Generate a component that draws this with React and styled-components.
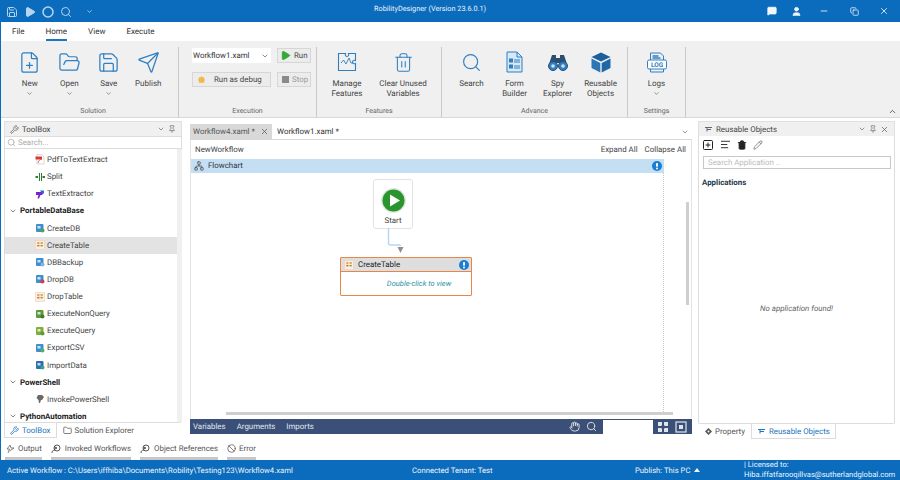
import React from "react";
import styled, { createGlobalStyle } from "styled-components";
import {
  FilePlus, FolderOpen, Save, Send, Trash2, Search, Play, ChevronDown, ChevronUp, Pin, X,
  Circle, Minus, MessageSquare, User, Copy, Pencil, Hand, Network, SquarePlus, AlignLeft, Folder, Ban, Wrench,
} from "lucide-react";

const GlobalStyle = createGlobalStyle`
  html, body { margin: 0; padding: 0; background: #fff; }
  body {
    font-family: Roboto, "Noto Sans", sans-serif;
    font-size: 7.9px;
    color: #333;
    text-rendering: geometricPrecision;
  }
  * { box-sizing: border-box; }
`;

const Window = styled.div`
  width: 900px;
  height: 480px;
  display: flex;
  flex-direction: column;
  overflow: hidden;
  border-left: 1px solid #0b6cbd;
`;

const TitleBar = styled.div`
  height: 22px;
  flex: none;
  background: #0b6cbd;
  display: flex;
  align-items: center;
  color: #eaf3fb;
  padding-left: 5px;
`;

const QuickTools = styled.div`
  display: flex;
  align-items: center;
  gap: 6px;
  width: 368px;
  padding-top: 1px;
  svg { color: #b9d5ee; }
`;

const Title = styled.div`
  flex: 1;
  font-size: 7.3px;
  margin-top: -5px;
`;

const WindowTools = styled.div`
  display: grid;
  grid-template-columns: 26px 23px 32px 29px 29px;
  justify-items: center;
  align-items: center;
  padding-right: 2px;
  svg { color: #f2f7fb; }
`;

const MenuBar = styled.div`
  height: 19px;
  flex: none;
  background: #fff;
  display: flex;
  gap: 21px;
  padding-left: 11px;
  align-items: center;
`;

const MenuItem = styled.div`
  height: 19px;
  line-height: 20px;
  font-size: 8px;
  color: #333;
  border-bottom: ${(p) => (p.$active ? "2px solid #1a75c0" : "2px solid transparent")};
`;

const Ribbon = styled.div`
  height: 77px;
  flex: none;
  background: #f0f0f0;
  border-bottom: 1px solid #d8d8d8;
  display: flex;
  padding-left: 7px;
  padding-top: 6px;
  position: relative;
`;

const Group = styled.div`
  width: ${(p) => p.$w}px;
  height: 70px;
  flex: none;
  border-right: 1px solid #c9c9c9;
  display: flex;
  flex-direction: column;
  padding-left: ${(p) => p.$pad || 0}px;
`;

const GroupBody = styled.div`
  flex: 1;
  display: flex;
  align-items: flex-start;
`;

const GroupLabel = styled.div`
  height: 12px;
  line-height: 12px;
  font-size: 7px;
  text-align: center;
  color: #666;
  margin-left: ${(p) => (p.$pad ? -p.$pad : 0)}px;
`;

const BigButton = styled.div`
  width: ${(p) => p.$w}px;
  height: 52px;
  display: flex;
  flex-direction: column;
  align-items: center;
  padding-top: 3px;
  color: #2f7fc1;
`;

const BigIcon = styled.div`
  height: 24px;
  display: flex;
  align-items: center;
`;

const BigLabel = styled.div`
  margin-top: 5px;
  font-size: 8px;
  line-height: 9.5px;
  color: #444;
  text-align: center;
  white-space: pre-line;
`;

const ExecGrid = styled.div`
  display: grid;
  grid-template-columns: 79px 34px;
  column-gap: 6px;
  row-gap: 9px;
  padding: 1px 0 0 13px;
`;

const Combo = styled.div`
  height: 15px;
  background: #fff;
  display: flex;
  align-items: center;
  justify-content: space-between;
  padding: 0 2px 0 1px;
  font-size: 7.9px;
  color: #333;
  svg { color: #555; }
`;

const ExecButton = styled.div`
  height: 15px;
  border: 1px solid #d6d6d6;
  background: #ececec;
  display: flex;
  align-items: center;
  gap: ${(p) => p.$gap || 3}px;
  padding-left: ${(p) => p.$pad || 3}px;
  font-size: 7.9px;
  color: ${(p) => (p.$muted ? "#999" : "#444")};
`;

const Collapse = styled.div`
  position: absolute;
  right: 3px;
  bottom: 1px;
  color: #333;
  display: flex;
`;

const Main = styled.div`
  flex: 1;
  min-height: 0;
  display: flex;
  background: #fff;
`;

const LeftColumn = styled.div`
  width: 178px;
  flex: none;
  margin-left: 3px;
  display: flex;
  flex-direction: column;
  padding-top: 3px;
`;

const PanelHeader = styled.div`
  height: 15px;
  flex: none;
  display: flex;
  align-items: center;
  gap: 3px;
  padding: 0 5px;
  background: #f0f0f0;
  border: 1px solid #e0e0e0;
  border-bottom: 0;
  font-size: 7.9px;
  color: #444;
  svg { color: #666; flex: none; }
`;

const HeaderDots = styled.div`
  flex: 1;
  height: 4px;
  margin: 0 3px;
  background-image: radial-gradient(#c4c4c4 0.6px, transparent 0.7px);
  background-size: 2px 2px;
`;

const SearchBox = styled.div`
  height: 13px;
  flex: none;
  background: #fff;
  border: 1px solid #dcdcdc;
  display: flex;
  align-items: center;
  gap: 2px;
  padding-left: 2px;
  font-size: 7.9px;
  color: #aaa;
  svg { color: #aaa; }
`;

const ToolList = styled.div`
  height: 274px;
  flex: none;
  position: relative;
  overflow: hidden;
  padding-top: 2px;
  border: 1px solid #dcdcdc;
  border-top: 0;
  border-right: 5px solid #f0f0f0;
`;

const ListThumb = styled.div`
  position: absolute;
  right: -5px;
  top: 212px;
  width: 4px;
  height: 14px;
  background: #c8c8c8;
`;

const TreeRow = styled.div`
  height: 17.13px;
  display: flex;
  align-items: center;
  gap: ${(p) => (p.$head ? 3 : 2)}px;
  padding-left: ${(p) => (p.$head ? 4 : 30)}px;
  font-size: 7.9px;
  font-weight: ${(p) => (p.$head ? 700 : 400)};
  color: ${(p) => (p.$head ? "#222" : "#444")};
  background: ${(p) => (p.$selected ? "#e3e3e3" : "transparent")};
  svg { flex: none; }
`;

const PanelTabs = styled.div`
  height: 15px;
  flex: none;
  display: flex;
  align-items: center;
  margin-left: ${(p) => p.$left || 0}px;
`;

const PanelTab = styled.div`
  height: 15px;
  display: flex;
  align-items: center;
  gap: 3px;
  padding: 0 5px;
  font-size: 7.9px;
  color: ${(p) => (p.$active ? "#1a75c0" : "#555")};
  background: #fff;
  border: ${(p) => (p.$active ? "1px solid #dcdcdc" : "1px solid transparent")};
  border-top: 0;
`;

const BottomTabs = styled.div`
  height: 20px;
  margin-top: 2px;
  display: flex;
  gap: 9px;
  padding-left: 1px;
  width: 300px;
`;

const BottomTab = styled.div`
  height: 20px;
  display: flex;
  align-items: center;
  gap: 3px;
  font-size: 7.9px;
  color: #555;
  white-space: nowrap;
  border-bottom: 3px solid #c6c6c6;
`;

const Center = styled.div`
  width: 502px;
  flex: none;
  margin-left: 8px;
  padding-top: 6px;
  display: flex;
  flex-direction: column;
`;

const DocTabs = styled.div`
  height: 16px;
  flex: none;
  display: flex;
  align-items: center;
  border-bottom: 1px solid #d8d8d8;
  padding-right: 3px;
`;

const DocTab = styled.div`
  height: 15px;
  display: flex;
  align-items: center;
  justify-content: space-between;
  width: ${(p) => (p.$active ? "82px" : "auto")};
  padding: 0 3px;
  margin-right: 2px;
  font-size: 7.9px;
  color: ${(p) => (p.$active ? "#555" : "#333")};
  background: ${(p) => (p.$active ? "#d9d9d9" : "#fff")};
`;

const Breadcrumb = styled.div`
  height: 19px;
  flex: none;
  display: flex;
  align-items: center;
  justify-content: space-between;
  padding: 0 5px 0 4px;
  font-size: 7.9px;
  color: #444;
  border-left: 1px solid #e4e4e4;
  border-right: 1px solid #e4e4e4;
`;

const CrumbLinks = styled.div`
  display: flex;
  gap: 7px;
`;

const Canvas = styled.div`
  height: 259px;
  flex: none;
  position: relative;
  border: 1px solid #e4e4e4;
  border-top: 0;
  border-bottom: 0;
  overflow: hidden;
`;

const FlowHeader = styled.div`
  width: 473px;
  height: 14px;
  background: #c4dff3;
  display: flex;
  align-items: center;
  justify-content: space-between;
  padding: 0 2px 1px 3px;
  font-size: 7.9px;
  color: #333;
`;

const FlowTitle = styled.div`
  display: flex;
  align-items: center;
  gap: 4px;
`;

const FlowBorder = styled.div`
  position: absolute;
  left: 472px;
  top: 14px;
  bottom: 4px;
  border-right: 1px dotted #c8c8c8;
`;

const ScrollV = styled.div`
  position: absolute;
  right: 2px;
  top: 43px;
  width: 3px;
  height: 103px;
  background: #cfcfcf;
`;

const ScrollH = styled.div`
  position: absolute;
  left: 35px;
  bottom: 3px;
  width: 447px;
  height: 3px;
  background: #cfcfcf;
`;

const StartNode = styled.div`
  position: absolute;
  left: 182px;
  top: 20px;
  width: 40px;
  height: 50px;
  background: #fff;
  border: 1px solid #e2e2e2;
  border-radius: 3px;
  display: flex;
  flex-direction: column;
  align-items: center;
  padding-top: 8px;
  gap: 3px;
  font-size: 7.9px;
  color: #444;
`;

const Connector = styled.svg`
  position: absolute;
  left: 196px;
  top: 69px;
`;

const ActivityNode = styled.div`
  position: absolute;
  left: 149px;
  top: 98px;
  width: 132px;
  height: 39px;
  background: #fff;
  border: 1px solid #e8864a;
  border-radius: 1px;
`;

const ActivityHead = styled.div`
  height: 14px;
  background: #dedede;
  border-bottom: 1px solid #e8864a;
  display: flex;
  align-items: center;
  justify-content: space-between;
  padding: 0 2px 0 3px;
  font-size: 7.9px;
  color: #222;
`;

const ActivityTitle = styled.div`
  display: flex;
  align-items: center;
  gap: 4px;
`;

const ActivityHint = styled.div`
  height: 23px;
  display: flex;
  align-items: center;
  justify-content: center;
  padding-left: 26px;
  font-size: 7.5px;
  font-style: italic;
  color: #2b93a8;
`;

const DesignerBar = styled.div`
  height: 15px;
  flex: none;
  margin-top: 1px;
  background: #3b5078;
  display: flex;
  align-items: center;
  padding-left: 3px;
  gap: 11px;
  font-size: 7.9px;
  color: #e2e7ef;
`;

const ZoomTools = styled.div`
  margin-left: auto;
  display: flex;
  align-items: center;
  gap: 6px;
  padding-right: 5px;
  svg { color: #e6e6e6; flex: none; }
`;

const ZoomCombo = styled.div`
  width: 50px;
  height: 14px;
  background: #fff;
  margin-right: -2px;
`;

const RightColumn = styled.div`
  width: 197px;
  flex: none;
  margin-left: 6px;
  padding-top: 3px;
  display: flex;
  flex-direction: column;
`;

const ReusablePanel = styled.div`
  height: 288px;
  flex: none;
  border: 1px solid #dcdcdc;
  border-top: 0;
  border-radius: 0 0 2px 2px;
  display: flex;
  flex-direction: column;
  position: relative;
`;

const IconRow = styled.div`
  height: 17px;
  display: flex;
  align-items: center;
  gap: 6px;
  padding-left: 3px;
  color: #222;
`;

const AppSearch = styled.div`
  height: 13px;
  margin: 3px 3px 0 4px;
  border: 1px solid #c8c8c8;
  padding-left: 4px;
  line-height: 11px;
  font-size: 7.9px;
  color: #bbb;
`;

const SectionTitle = styled.div`
  margin: 9px 0 0 3px;
  font-size: 7.9px;
  font-weight: 700;
  color: #26384d;
`;

const EmptyNote = styled.div`
  position: absolute;
  left: 0;
  right: 0;
  top: 168px;
  text-align: center;
  font-size: 7.9px;
  font-style: italic;
  color: #666;
`;

const StatusBar = styled.div`
  height: 20px;
  flex: none;
  background: #0b6cbd;
  color: #eef5fb;
  font-size: 7.7px;
  display: flex;
  align-items: center;
  padding-left: 6px;
`;

const StatusPath = styled.div`
  width: 405px;
  flex: none;
  white-space: nowrap;
`;

const StatusTenant = styled.div`
  width: 223px;
  flex: none;
`;

const StatusPublish = styled.div`
  width: 109px;
  flex: none;
  display: flex;
  align-items: center;
  gap: 4px;
`;

const StatusTriangle = styled.span`
  width: 0;
  height: 0;
  border-left: 3px solid transparent;
  border-right: 3px solid transparent;
  border-bottom: 4px solid #eef5fb;
`;

const License = styled.div`
  white-space: nowrap;
  line-height: 10px;
  font-size: 7.6px;
`;

const FileIcon = ({ color, accent }) => (
  <svg width="10" height="10" viewBox="0 0 10 10">
    <rect x="1" y="1" width="7.5" height="8" rx="1" fill={color} />
    <rect x="2.5" y="3" width="3" height="2.5" fill="#fff" opacity="0.75" />
    <circle cx="7.5" cy="7.5" r="2" fill={accent || color} />
  </svg>
);

const TextExtractorIcon = () => (
  <svg width="10" height="10" viewBox="0 0 10 10">
    <path d="M1 3h8L7 6H5.5L4 9.5H2.5L3.5 6H1z" fill="#7a1fd1" />
    <path d="M5 1.5h4v3H7z" fill="#1f6fe0" />
  </svg>
);

const SplitIcon = () => (
  <svg width="10" height="10" viewBox="0 0 10 10">
    <rect x="4" y="1" width="1" height="8" fill="#2e7d32" />
    <rect x="6" y="1" width="1" height="8" fill="#2e7d32" />
    <rect x="0.5" y="4" width="2.5" height="2" fill="#2e7d32" />
    <rect x="7.5" y="4" width="2.5" height="2" fill="#2e7d32" />
  </svg>
);

const PdfIcon = () => (
  <svg width="10" height="11" viewBox="0 0 10 11">
    <path d="M2 .5h4.5L9 3v7H2z" fill="#fff" stroke="#c9c9c9" strokeWidth=".7" />
    <rect x=".5" y="2.5" width="6.5" height="3" fill="#d93a32" />
    <path d="M3 9c1-3 2-4 4-4" stroke="#d93a32" strokeWidth=".7" fill="none" />
  </svg>
);

const TableIcon = ({ size = 10 }) => (
  <svg width={size} height={size} viewBox="0 0 9 9">
    <rect x=".5" y=".5" width="8" height="8" fill="#fbeee2" stroke="#efd3bb" strokeWidth=".6" />
    <rect x="2" y="2" width="2" height="1.4" fill="#e2902f" />
    <rect x="5" y="2" width="2" height="1.4" fill="#e2902f" />
    <rect x="2" y="4.4" width="2" height="1.4" fill="#d9673f" />
    <rect x="5" y="4.4" width="2" height="1.4" fill="#6bae4a" />
  </svg>
);

const ShellIcon = () => (
  <svg width="10" height="10" viewBox="0 0 10 10">
    <path d="M3 1h4l2 2-2 3H6L5 9H4L3.5 6 1.5 4z" fill="#6a6a6a" />
  </svg>
);

const PropertyIcon = () => (
  <svg width="7" height="7" viewBox="0 0 7 7">
    <path d="M3.5 0 7 3.5 3.5 7 0 3.5z" fill="#555" />
    <circle cx="3.5" cy="3.5" r="1" fill="#fff" />
  </svg>
);

const LinkIcon = () => (
  <svg width="9" height="7" viewBox="0 0 9 7" fill="none" stroke="currentColor" strokeWidth="1">
    <path d="M1 1.5h7M3 1.5v4M3 3.5h4" />
  </svg>
);

const InvokeIcon = () => (
  <svg width="11" height="10" viewBox="0 0 11 10" fill="none" stroke="#555" strokeWidth="1">
    <circle cx="6" cy="4" r="3" />
    <path d="M1 9c0-2 1-3 3-3M4 3l2 1-2 1z" />
  </svg>
);

const OutputIcon = () => (
  <svg width="10" height="10" viewBox="0 0 10 10" fill="none" stroke="#666" strokeWidth=".8">
    <path d="M5 1 2 5h2.5L3 9M5 1l1 3h3L4.5 7" />
  </svg>
);

const InfoBadge = () => (
  <svg width="10" height="10" viewBox="0 0 10 10">
    <circle cx="5" cy="5" r="5" fill="#1a7fd4" />
    <rect x="4" y="2" width="2" height="3.8" rx=".8" fill="#fff" />
    <circle cx="5" cy="7.5" r="1" fill="#fff" />
  </svg>
);

const PuzzleIcon = () => (
  <svg width="20" height="20" viewBox="0 0 20 20" fill="none" stroke="#2f7fc1" strokeWidth="1.1">
    <path d="M1.5 1.5h7c-1 2 1 3 1.5 3s2.5-1 1.5-3h7v7c-2-1-3 1-3 1.5s1 2.5 3 1.5v7h-17z" />
    <path d="M4 11l2.5-3 2.5 4 3-6 2 5h2" strokeWidth=".9" />
  </svg>
);

const FormIcon = () => (
  <svg width="17" height="22" viewBox="0 0 17 22" fill="none" stroke="#2f7fc1" strokeWidth="1">
    <path d="M1 1h10l5 5v15H1z" fill="#d8e8f5" />
    <path d="M11 1v5h5" />
    <rect x="3.5" y="8" width="3" height="3" fill="#2f7fc1" />
    <path d="M8 9h6M8 11h6" />
    <rect x="3.5" y="14" width="3" height="3" fill="#2f7fc1" />
    <path d="M8 15h6M8 17h6" />
  </svg>
);

const BinocularsIcon = () => (
  <svg width="22" height="20" viewBox="0 0 22 20">
    <path d="M2 12 5 3h4v9zM20 12 17 3h-4v9z" fill="#2b4f73" />
    <rect x="9" y="6" width="4" height="5" fill="#2b4f73" />
    <circle cx="6" cy="14" r="4.5" fill="#2f7fc1" stroke="#2b4f73" />
    <circle cx="16" cy="14" r="4.5" fill="#2f7fc1" stroke="#2b4f73" />
    <circle cx="6" cy="14" r="1.8" fill="#cfe3f3" />
    <circle cx="16" cy="14" r="1.8" fill="#cfe3f3" />
  </svg>
);

const CubeIcon = () => (
  <svg width="20" height="21" viewBox="0 0 20 21">
    <path d="M10 .5 19.5 5 10 9.5.5 5z" fill="#1c5f9c" />
    <path d="M.5 6.5 9.3 11v9.5L.5 16z" fill="#2c76b5" />
    <path d="M19.5 6.5 10.7 11v9.5l8.8-4.5z" fill="#1f68a8" />
  </svg>
);

const LogIcon = () => (
  <svg width="20" height="21" viewBox="0 0 20 21" fill="none" stroke="#2f7fc1" strokeWidth="1">
    <path d="M3.5 8V1h10l3 3v4" />
    <path d="M5.5 4h6M5.5 6h8" strokeWidth="1.4" />
    <rect x=".5" y="8" width="19" height="9" rx="1.5" fill="#fff" />
    <text x="10" y="15" textAnchor="middle" fontSize="6.5" fontWeight="700" fontFamily="Roboto" fill="#2f7fc1" stroke="none">LOG</text>
    <path d="M3.5 17v3h13v-3" />
  </svg>
);

const StartGlyph = () => (
  <svg width="25" height="25" viewBox="0 0 25 25">
    <circle cx="12.5" cy="12.5" r="12.5" fill="#dfe7df" />
    <circle cx="12.5" cy="12.5" r="11" fill="#2a952f" />
    <path d="M9 6.5 19 12.5 9 18.5z" fill="#fff" />
  </svg>
);

const DebugIcon = () => (
  <svg width="9" height="9" viewBox="0 0 9 9">
    <circle cx="4.5" cy="5" r="3" fill="#f2b84b" />
    <path d="M4.5 1v7M1 5h7M2 2l5 6M7 2 2 8" stroke="#f2b84b" strokeWidth=".7" />
  </svg>
);

const FitIcon = () => (
  <svg width="12" height="12" viewBox="0 0 12 12" fill="#dfe4ec">
    <rect x="1" y="1" width="4" height="4" />
    <rect x="7" y="1" width="4" height="4" />
    <rect x="1" y="7" width="4" height="4" />
    <rect x="7" y="7" width="4" height="4" />
    <circle cx="6" cy="6" r="2" fill="#3b5078" />
  </svg>
);

const ExpandIcon = () => (
  <svg width="12" height="12" viewBox="0 0 12 12" fill="none" stroke="#dfe4ec" strokeWidth="1.2">
    <rect x="1" y="1" width="10" height="10" />
    <rect x="4" y="4" width="4" height="4" fill="#dfe4ec" stroke="none" />
  </svg>
);

const tools = [
  { name: "PdfToTextExtract", icon: <PdfIcon /> },
  { name: "Split", icon: <SplitIcon /> },
  { name: "TextExtractor", icon: <TextExtractorIcon /> },
  { name: "PortableDataBase", head: true },
  { name: "CreateDB", icon: <FileIcon color="#3f8fd0" accent="#46a35a" /> },
  { name: "CreateTable", icon: <TableIcon />, selected: true },
  { name: "DBBackup", icon: <FileIcon color="#3f8fd0" accent="#7ab8e8" /> },
  { name: "DropDB", icon: <FileIcon color="#3f8fd0" accent="#d9365a" /> },
  { name: "DropTable", icon: <TableIcon /> },
  { name: "ExecuteNonQuery", icon: <FileIcon color="#5b9a3c" accent="#3f7a2c" /> },
  { name: "ExecuteQuery", icon: <FileIcon color="#7fae3a" accent="#5b9a3c" /> },
  { name: "ExportCSV", icon: <FileIcon color="#3f8fd0" accent="#4eb06a" /> },
  { name: "ImportData", icon: <FileIcon color="#2a6fb5" accent="#3aa675" /> },
  { name: "PowerShell", head: true },
  { name: "InvokePowerShell", icon: <ShellIcon /> },
  { name: "PythonAutomation", head: true },
];

const RibbonTool = ({ w, icon, label, more }) => (
  <BigButton $w={w}>
    <BigIcon>{icon}</BigIcon>
    <BigLabel>{label}</BigLabel>
    {more && <ChevronDown size={7} color="#555" style={{ marginTop: 1 }} />}
  </BigButton>
);

const App = () => (
  <Window>
    <GlobalStyle />
    <TitleBar>
      <QuickTools>
        <Save size={12} />
        <Play size={12} fill="currentColor" />
        <Circle size={12} strokeWidth={3} />
        <Search size={12} />
        <ChevronDown size={7} color="#fff" style={{ marginLeft: 8 }} />
      </QuickTools>
      <Title>RobilityDesigner (Version 23.6.0.1)</Title>
      <WindowTools>
        <MessageSquare size={10} fill="currentColor" />
        <User size={11} fill="currentColor" />
        <Minus size={10} />
        <Copy size={9} />
        <X size={10} />
      </WindowTools>
    </TitleBar>

    <MenuBar>
      <MenuItem>File</MenuItem>
      <MenuItem $active>Home</MenuItem>
      <MenuItem>View</MenuItem>
      <MenuItem>Execute</MenuItem>
    </MenuBar>

    <Ribbon>
      <Group $w={171} $pad={2}>
        <GroupBody>
          <RibbonTool w={39.5} icon={<FilePlus size={23} strokeWidth={1.3} />} label="New" more />
          <RibbonTool w={39.5} icon={<FolderOpen size={23} strokeWidth={1.3} />} label="Open" more />
          <RibbonTool w={39.5} icon={<Save size={23} strokeWidth={1.3} />} label="Save" more />
          <RibbonTool w={39.5} icon={<Send size={23} strokeWidth={1.3} />} label="Publish" />
        </GroupBody>
        <GroupLabel $pad={2}>Solution</GroupLabel>
      </Group>
      <Group $w={138}>
        <GroupBody>
          <ExecGrid>
            <Combo>
              Workflow1.xaml
              <ChevronDown size={8} />
            </Combo>
            <ExecButton $pad={2}>
              <Play size={11} color="#35a836" fill="#35a836" />
              Run
            </ExecButton>
            <ExecButton $gap={8} $pad={4}>
              <DebugIcon />
              Run as debug
            </ExecButton>
            <ExecButton $muted $pad={4}>
              <svg width="7" height="7"><rect width="7" height="7" fill="#8a8a8a" /></svg>
              Stop
            </ExecButton>
          </ExecGrid>
        </GroupBody>
        <GroupLabel>Execution</GroupLabel>
      </Group>
      <Group $w={125} $pad={2}>
        <GroupBody>
          <RibbonTool w={56} icon={<PuzzleIcon />} label={"Manage\nFeatures"} />
          <RibbonTool w={56} icon={<Trash2 size={21} strokeWidth={1.2} />} label={"Clear Unused\nVariables"} />
        </GroupBody>
        <GroupLabel $pad={2}>Features</GroupLabel>
      </Group>
      <Group $w={186} $pad={8}>
        <GroupBody>
          <RibbonTool w={43} icon={<Search size={21} strokeWidth={1.3} />} label="Search" />
          <RibbonTool w={43} icon={<FormIcon />} label={"Form\nBuilder"} />
          <RibbonTool w={43} icon={<BinocularsIcon />} label={"Spy\nExplorer"} />
          <RibbonTool w={43} icon={<CubeIcon />} label={"Reusable\nObjects"} />
        </GroupBody>
        <GroupLabel $pad={8}>Advance</GroupLabel>
      </Group>
      <Group $w={58}>
        <GroupBody>
          <RibbonTool w={57} icon={<LogIcon />} label="Logs" more />
        </GroupBody>
        <GroupLabel>Settings</GroupLabel>
      </Group>
      <Collapse>
        <ChevronUp size={9} />
      </Collapse>
    </Ribbon>

    <Main>
      <LeftColumn>
        <PanelHeader>
          <Wrench size={9} />
          ToolBox
          <HeaderDots />
          <ChevronDown size={8} />
          <Pin size={8} />
        </PanelHeader>
        <SearchBox>
          <Search size={9} />
          Search...
        </SearchBox>
        <ToolList>
          {tools.map((t) => (
            <TreeRow key={t.name} $head={t.head} $selected={t.selected}>
              {t.head ? <ChevronDown size={8} color="#444" /> : t.icon}
              {t.name}
            </TreeRow>
          ))}
          <ListThumb />
        </ToolList>
        <PanelTabs>
          <PanelTab $active>
            <Wrench size={9} />
            ToolBox
          </PanelTab>
          <PanelTab>
            <Folder size={9} />
            Solution Explorer
          </PanelTab>
        </PanelTabs>
        <BottomTabs>
          <BottomTab>
            <OutputIcon />
            Output
          </BottomTab>
          <BottomTab>
            <InvokeIcon />
            Invoked Workflows
          </BottomTab>
          <BottomTab>
            <InvokeIcon />
            Object References
          </BottomTab>
          <BottomTab>
            <Ban size={9} />
            Error
          </BottomTab>
        </BottomTabs>
      </LeftColumn>

      <Center>
        <DocTabs>
          <DocTab $active>
            Workflow4.xaml *
            <X size={9} />
          </DocTab>
          <DocTab>Workflow1.xaml *</DocTab>
          <ChevronDown size={8} color="#666" style={{ marginLeft: "auto" }} />
        </DocTabs>
        <Breadcrumb>
          NewWorkflow
          <CrumbLinks>
            <span>Expand All</span>
            <span>Collapse All</span>
          </CrumbLinks>
        </Breadcrumb>
        <Canvas>
          <FlowHeader>
            <FlowTitle>
              <Network size={10} color="#555" />
              Flowchart
            </FlowTitle>
            <InfoBadge />
          </FlowHeader>
          <FlowBorder />
          <StartNode>
            <StartGlyph />
            Start
          </StartNode>
          <Connector width="20" height="30" viewBox="0 0 20 30" fill="none">
            <path d="M1.5 0v15q0 2 2 2h9q1 0 1 1" stroke="#b8d6f0" strokeWidth="1.5" />
            <path d="M10.5 19h6l-3 6z" fill="#8f8f8f" />
          </Connector>
          <ActivityNode>
            <ActivityHead>
              <ActivityTitle>
                <TableIcon />
                CreateTable
              </ActivityTitle>
              <InfoBadge />
            </ActivityHead>
            <ActivityHint>Double-click to view</ActivityHint>
          </ActivityNode>
          <ScrollV />
          <ScrollH />
        </Canvas>
        <DesignerBar>
          <span>Variables</span>
          <span>Arguments</span>
          <span>Imports</span>
          <ZoomTools>
            <Hand size={11} />
            <Search size={11} />
            <ZoomCombo />
            <FitIcon />
            <ExpandIcon />
          </ZoomTools>
        </DesignerBar>
      </Center>

      <RightColumn>
        <PanelHeader>
          <LinkIcon />
          Reusable Objects
          <HeaderDots />
          <ChevronDown size={8} />
          <Pin size={8} />
          <X size={9} />
        </PanelHeader>
        <ReusablePanel>
          <IconRow>
            <SquarePlus size={12} />
            <AlignLeft size={11} />
            <Trash2 size={10} fill="currentColor" />
            <Pencil size={10} color="#777" />
          </IconRow>
          <AppSearch>Search Application ..</AppSearch>
          <SectionTitle>Applications</SectionTitle>
          <EmptyNote>No application found!</EmptyNote>
        </ReusablePanel>
        <PanelTabs $left={1}>
          <PanelTab>
            <PropertyIcon />
            Property
          </PanelTab>
          <PanelTab $active>
            <LinkIcon />
            Reusable Objects
          </PanelTab>
        </PanelTabs>
      </RightColumn>
    </Main>

    <StatusBar>
      <StatusPath>Active Workflow : C:\Users\iffhiba\Documents\Robility\Testing123\Workflow4.xaml</StatusPath>
      <StatusTenant>Connected Tenant: Test</StatusTenant>
      <StatusPublish>
        Publish: This PC
        <StatusTriangle />
      </StatusPublish>
      <License>
        | Licensed to:
        <br />
        Hiba.iffatfarooqillvas@sutherlandglobal.com
      </License>
    </StatusBar>
  </Window>
);

export default App;
